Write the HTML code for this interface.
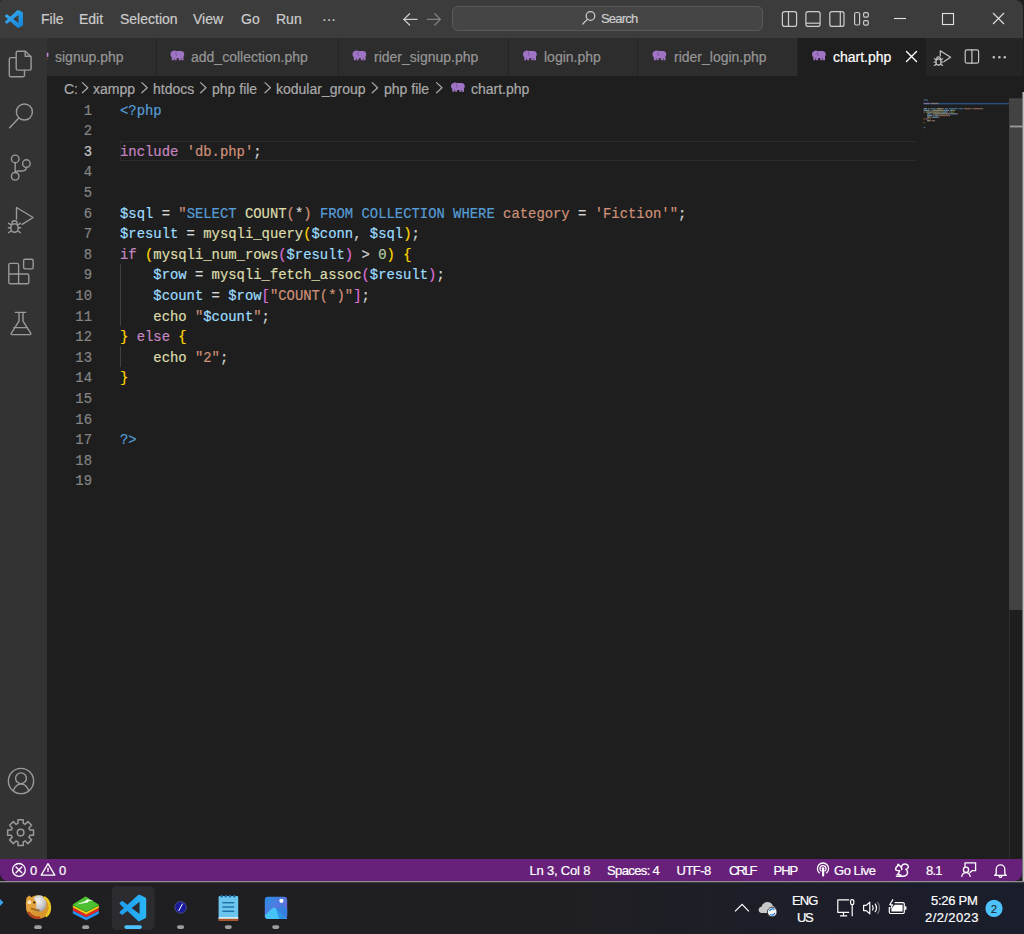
<!DOCTYPE html>
<html><head><meta charset="utf-8">
<style>
*{box-sizing:border-box;margin:0;padding:0}
html,body{width:1024px;height:934px;overflow:hidden;background:#1e1e22}
body{position:relative;font-family:"Liberation Sans",sans-serif;}
.a{position:absolute;white-space:pre;-webkit-text-stroke:0.2px currentColor}
#title{left:0;top:0;width:1023px;height:38px;background:#3c3c3c;border-top-right-radius:8px;border-top-left-radius:2px}
.menu{top:11px;font-size:14px;color:#cccccc;line-height:16px}
#act{left:0;top:38px;width:47px;height:821px;background:#333333}
#tabs{left:47px;top:38px;width:976px;height:38px;background:#252526}
.tab{top:38px;height:38px;background:#2d2d2d;border-right:1px solid #252526}
.tabt{top:49px;font-size:14px;color:#969696;line-height:16px}
#editor{left:47px;top:76px;width:976px;height:783px;background:#1e1e1e}
.bc{top:81px;font-size:14px;color:#a9a9a9;line-height:16px}
.ln{font-family:"Liberation Mono",monospace;font-size:13.88px;line-height:20.6px;color:#858585;text-align:right;width:40px;left:52px}
.code{font-family:"Liberation Mono",monospace;font-size:13.88px;line-height:20.6px;color:#d4d4d4;left:120px}
#status{left:0;top:859px;width:1022px;height:22px;background:#68217a;border-bottom-left-radius:8px;border-bottom-right-radius:8px}
.st{top:862.5px;font-size:13px;color:#ffffff;line-height:16px}
#taskbar{left:0;top:882px;width:1024px;height:52px;background:linear-gradient(90deg,#1f1f22 0%,#1f1f23 55%,#1c1e29 80%,#1a1d2b 100%)}
.tk{font-size:12px;color:#ffffff;line-height:14px}
.v{color:#9cdcfe}.k{color:#569cd6}.s{color:#ce9178}.f{color:#dcdcaa}.p{color:#c586c0}.n{color:#b5cea8}.g{color:#ffd700}.o{color:#da70d6}.w{color:#d4d4d4}
</style></head><body>
<div class="a" id="title"></div>
<div class="a" id="act"></div>
<div class="a" id="tabs"></div>
<div class="a" id="editor"></div>
<div class="a" id="status"></div>
<div class="a" id="taskbar"></div>
<div class="a tab" style="left:47px;width:110px"></div>
<div class="a tab" style="left:157px;width:182px"></div>
<div class="a tab" style="left:339px;width:170px"></div>
<div class="a tab" style="left:509px;width:129px"></div>
<div class="a tab" style="left:638px;width:160px"></div>
<div class="a tab" style="left:798px;width:128px;background:#1e1e1e;border-right:none"></div>
<div class="a" style="left:452px;top:6px;width:311px;height:25px;border-radius:6px;background:#454545;border:1px solid #5a5a5a"></div>
<!-- current line -->
<div class="a" style="left:120px;top:141px;width:797px;height:20px;border:1.6px solid #2a2a2a;border-right:none"></div>


<svg class="a" style="left:0;top:0" width="1024" height="934" viewBox="0 0 1024 934">
<defs>
<linearGradient id="vsg" x1="0" y1="0" x2="1" y2="1"><stop offset="0" stop-color="#3cb4f5"/><stop offset="1" stop-color="#1280d8"/></linearGradient>
</defs>
<!-- VS Code logo title -->
<g transform="translate(5,10) scale(0.18)"><path fill="url(#vsg)" d="M96.46 10.8L75.86.87a6.23 6.23 0 0 0-7.1 1.2L29.33 38.04 12.15 25a4.16 4.16 0 0 0-5.320.24L1.33 30.25a4.17 4.17 0 0 0 0 6.16L16.23 50 1.33 63.59a4.17 4.17 0 0 0 0 6.160l5.5 5a4.16 4.16 0 0 0 5.32.24l17.18-13.04 39.43 35.97a6.22 6.22 0 0 0 7.1 1.2l20.6-9.92A6.25 6.25 0 0 0 100 83.6V16.4a6.25 6.25 0 0 0-3.540-5.6zM75 72.7L45.1 50 75 27.3z"/></g>
<!-- nav arrows -->
<g fill="none" stroke="#cccccc" stroke-width="1.3" stroke-linecap="round" stroke-linejoin="round">
<path d="M403.6 19.4h13.4M409.6 13.8l-5.8 5.6 5.8 5.6"/>
</g>
<g fill="none" stroke="#808080" stroke-width="1.3" stroke-linecap="round" stroke-linejoin="round">
<path d="M427.4 19.4h12.8M434.8 13.8l5.6 5.6-5.6 5.6"/>
</g>
<!-- search magnifier -->
<g fill="none" stroke="#cccccc" stroke-width="1.2" stroke-linecap="round"><circle cx="590.5" cy="16" r="4.3"/><path d="M587.3 19.3l-4.5 4.7"/></g>
<!-- layout icons -->
<g fill="none" stroke="#cccccc" stroke-width="1.2">
<rect x="782.4" y="11.6" width="14.2" height="14.8" rx="2.2"/><path d="M788.5 11.6v14.8"/>
<rect x="805.9" y="11.6" width="14.2" height="14.8" rx="2.2"/><path d="M805.9 23.2h14.2"/>
<rect x="829.8" y="11.6" width="14.2" height="14.8" rx="2.2"/><path d="M840.3 11.6v14.8"/>
<rect x="854.6" y="12.5" width="5" height="12.5" rx="1.5"/><rect x="863.6" y="12.6" width="4.7" height="4.5" rx="1.3"/><rect x="863.6" y="20.6" width="4.7" height="4.5" rx="1.3"/>
</g>
<!-- window controls -->
<g fill="none" stroke="#e0e0e0" stroke-width="1.1">
<path d="M894 18.5h12"/>
<rect x="942.5" y="13.5" width="11" height="11"/>
<path d="M993 13l11 11M1004 13l-11 11"/>
</g>
<!-- activity bar icons -->
<g fill="none" stroke="#9a9a9a" stroke-width="1.4" stroke-linejoin="round" stroke-linecap="round">
<path d="M16.2 55.5v-2.6a1.6 1.6 0 0 1 1.6-1.6h7.6l5.7 5.6v11.6a1.6 1.6 0 0 1-1.6 1.6h-11.7a1.6 1.6 0 0 1-1.6-1.6z"/>
<path d="M25.2 51.5v4.8h5.6"/>
<path d="M16.2 57.6h-5.3a1.6 1.6 0 0 0-1.6 1.6v16a1.6 1.6 0 0 0 1.6 1.6h12a1.6 1.6 0 0 0 1.6-1.6v-5"/>
<circle cx="24.4" cy="112" r="8"/><path d="M18.6 118.2l-9 9.6"/>
<circle cx="15.2" cy="158.9" r="3.8"/><circle cx="26.4" cy="163.6" r="3.8"/><circle cx="15.2" cy="176.3" r="3.8"/>
<path d="M15.2 162.7v9.8M26.4 167.4c0 3-2.5 3.6-5.5 3.6h-2.5c-2 0-3.2 0.5-3.2 1.5"/>
<path d="M16.5 219V207.5l16.6 10-11 6.8"/>
<ellipse cx="14.5" cy="228" rx="3.7" ry="4.3"/><path d="M11.9 223.4a2.6 2.6 0 0 1 5.2 0M10.8 227.8H8.4M18.2 227.8h2.4M11.2 224.9l-2.6-1.6M17.8 224.9l2.6-1.6M11.2 231l-2.6 1.6M17.8 231l2.6 1.6"/>
<path d="M8.8 274V265a1.6 1.6 0 0 1 1.6-1.6h6.6a1.6 1.6 0 0 1 1.6 1.6v9h8.6a1.6 1.6 0 0 1 1.6 1.6v6.6a1.6 1.6 0 0 1-1.6 1.6H10.4a1.6 1.6 0 0 1-1.6-1.6zM8.8 274h9.8v9.8"/>
<rect x="23.6" y="259.3" width="9.6" height="9.6" rx="1.6"/>
<path d="M15.4 312.4h10.3M19 312.4v8.8l-7.8 12.2a0.8 0.8 0 0 0 0.7 1.2h18.2a0.8 0.8 0 0 0 0.7-1.2l-7.8-12.2v-8.8M13.8 327.6h13.6"/>
<circle cx="21" cy="781" r="12.6"/><circle cx="21" cy="778.3" r="5.4"/><path d="M13.4 790.4c1.6-4 4.4-6.4 7.6-6.4s6 2.4 7.6 6.4"/>
</g>
<!-- gear -->
<g transform="translate(20.6,832.6)" fill="none" stroke="#9a9a9a" stroke-width="1.5" stroke-linejoin="round">
<path d="M-2.65 -9.23 L-2.62 -12.94 L2.62 -12.94 L2.65 -9.23 L4.65 -8.40 L7.29 -11.00 L11.00 -7.29 L8.40 -4.65 L9.23 -2.65 L12.94 -2.62 L12.94 2.62 L9.23 2.65 L8.40 4.65 L11.00 7.29 L7.29 11.00 L4.65 8.40 L2.65 9.23 L2.62 12.94 L-2.62 12.94 L-2.65 9.23 L-4.65 8.40 L-7.29 11.00 L-11.00 7.29 L-8.40 4.65 L-9.23 2.65 L-12.94 2.62 L-12.94 -2.62 L-9.23 -2.65 L-8.40 -4.65 L-11.00 -7.29 L-7.29 -11.00 L-4.65 -8.40Z"/>
<circle r="3.3"/>
</g>
<!-- tab actions -->
<g fill="none" stroke="#c5c5c5" stroke-width="1.2" stroke-linecap="round" stroke-linejoin="round">
<path d="M906.5 51.5l10 10M916.5 51.5l-10 10" stroke="#ffffff" stroke-width="1.4"/>
<path d="M940.3 56V50.8l10.3 6.5-6.5 4.3"/>
<ellipse cx="938.5" cy="62" rx="2.6" ry="3.2"/><path d="M936.7 58.6a1.8 1.8 0 0 1 3.6 0M935.9 62h-1.8M941.1 62h1.8M936.2 59.8l-1.8-1.1M940.8 59.8l1.8-1.1M936.2 64.3l-1.8 1.1M940.8 64.3l1.8 1.1"/>
<rect x="965.2" y="49.8" width="13.4" height="13.4" rx="1.8"/><path d="M971.9 49.8v13.4"/>
</g>
<g fill="#c5c5c5"><circle cx="993.8" cy="57.3" r="1.2"/><circle cx="999.4" cy="57.3" r="1.2"/><circle cx="1004.8" cy="57.3" r="1.2"/></g>
</svg>


<!-- breadcrumb chevrons + elephant icons, indent guides, minimap, scrollbar -->
<svg class="a" style="left:0;top:0" width="1024" height="934" viewBox="0 0 1024 934">
<defs>
<g id="ele">
<path d="M2.2 0.6C0.9 0.9 0 2.2 0 3.8c0 1.4 0.6 2.6 1.4 3.4v3.1h2.2V8.4h0.8v1.9h2.2V8.1h2.4v2.2h2.2V8.2h0.6v2.1h2.2V6.3c0.8-0.9 1-2.2 0.6-3.4C14.1 1.3 12.9 0.5 11.4 0.5H6.3C5.6 0.1 4.7-0.1 3.9 0 3.3 0.1 2.7 0.3 2.2 0.6z" fill="#a074c4"/>
<path d="M6.1 1.2c-0.5 1.5-0.5 3.2 0.6 4.4" fill="none" stroke="#6f4f9a" stroke-width="0.9"/>
</g>
</defs>
<g fill="none" stroke="#a9a9a9" stroke-width="1.2" stroke-linecap="round" stroke-linejoin="round">
<path d="M82.4 82.6l5.4 5.1-5.4 5.1M141.8 82.6l5.4 5.1-5.4 5.1M200.6 82.6l5.4 5.1-5.4 5.1M265 82.6l5.4 5.1-5.4 5.1M372.2 82.6l5.4 5.1-5.4 5.1M436.6 82.6l5.4 5.1-5.4 5.1"/>
</g>
<use href="#ele" transform="translate(451,82.6) scale(0.93,0.9)"/>
<use href="#ele" transform="translate(170.5,50.6) scale(0.93,0.93)"/>
<use href="#ele" transform="translate(352.5,50.6) scale(0.93,0.93)"/>
<use href="#ele" transform="translate(523,50.6) scale(0.93,0.93)"/>
<use href="#ele" transform="translate(652.5,50.6) scale(0.93,0.93)"/>
<use href="#ele" transform="translate(812,50.6) scale(0.93,0.93)"/>
<rect x="46.8" y="52.6" width="1.6" height="4.4" rx="0.8" fill="#c088d8"/><rect x="46.8" y="58.4" width="1.2" height="1.2" fill="#7a4a3a"/>
<!-- indent guides -->
<g fill="#404040"><rect x="120" y="264.2" width="1" height="61.8"/><rect x="120" y="346.6" width="1" height="20.6"/></g>
<!-- minimap -->
<rect x="923.5" y="102.9" width="85.5" height="1.5" fill="#27507a"/>
<g opacity="0.55"><rect x="923.60" y="99.40" width="4.38" height="1.3" fill="#569cd6"/><rect x="923.60" y="102.84" width="6.12" height="1.3" fill="#c586c0"/><rect x="930.60" y="102.84" width="7.00" height="1.3" fill="#ce9178"/><rect x="937.60" y="102.84" width="0.88" height="1.3" fill="#d4d4d4"/><rect x="923.60" y="108.00" width="3.50" height="1.3" fill="#9cdcfe"/><rect x="927.98" y="108.00" width="0.88" height="1.3" fill="#d4d4d4"/><rect x="929.73" y="108.00" width="0.88" height="1.3" fill="#ce9178"/><rect x="930.60" y="108.00" width="5.25" height="1.3" fill="#569cd6"/><rect x="936.73" y="108.00" width="4.38" height="1.3" fill="#dcdcaa"/><rect x="941.10" y="108.00" width="0.88" height="1.3" fill="#ce9178"/><rect x="941.98" y="108.00" width="0.88" height="1.3" fill="#d4d4d4"/><rect x="942.85" y="108.00" width="0.88" height="1.3" fill="#ce9178"/><rect x="944.60" y="108.00" width="3.50" height="1.3" fill="#569cd6"/><rect x="948.98" y="108.00" width="8.75" height="1.3" fill="#569cd6"/><rect x="958.60" y="108.00" width="4.38" height="1.3" fill="#569cd6"/><rect x="963.85" y="108.00" width="7.00" height="1.3" fill="#ce9178"/><rect x="971.73" y="108.00" width="0.88" height="1.3" fill="#d4d4d4"/><rect x="973.48" y="108.00" width="7.88" height="1.3" fill="#ce9178"/><rect x="981.35" y="108.00" width="0.88" height="1.3" fill="#ce9178"/><rect x="982.23" y="108.00" width="0.88" height="1.3" fill="#d4d4d4"/><rect x="923.60" y="109.72" width="6.12" height="1.3" fill="#9cdcfe"/><rect x="930.60" y="109.72" width="0.88" height="1.3" fill="#d4d4d4"/><rect x="932.35" y="109.72" width="10.50" height="1.3" fill="#dcdcaa"/><rect x="942.85" y="109.72" width="0.88" height="1.3" fill="#ffd700"/><rect x="943.73" y="109.72" width="4.38" height="1.3" fill="#9cdcfe"/><rect x="948.10" y="109.72" width="0.88" height="1.3" fill="#d4d4d4"/><rect x="949.85" y="109.72" width="3.50" height="1.3" fill="#9cdcfe"/><rect x="953.35" y="109.72" width="0.88" height="1.3" fill="#ffd700"/><rect x="954.23" y="109.72" width="0.88" height="1.3" fill="#d4d4d4"/><rect x="923.60" y="111.44" width="1.75" height="1.3" fill="#c586c0"/><rect x="926.23" y="111.44" width="0.88" height="1.3" fill="#ffd700"/><rect x="927.10" y="111.44" width="13.12" height="1.3" fill="#dcdcaa"/><rect x="940.23" y="111.44" width="0.88" height="1.3" fill="#da70d6"/><rect x="941.10" y="111.44" width="6.12" height="1.3" fill="#9cdcfe"/><rect x="947.23" y="111.44" width="0.88" height="1.3" fill="#da70d6"/><rect x="948.98" y="111.44" width="0.88" height="1.3" fill="#d4d4d4"/><rect x="950.73" y="111.44" width="0.88" height="1.3" fill="#b5cea8"/><rect x="951.60" y="111.44" width="0.88" height="1.3" fill="#ffd700"/><rect x="953.35" y="111.44" width="0.88" height="1.3" fill="#ffd700"/><rect x="927.10" y="113.16" width="3.50" height="1.3" fill="#9cdcfe"/><rect x="931.48" y="113.16" width="0.88" height="1.3" fill="#d4d4d4"/><rect x="933.23" y="113.16" width="15.75" height="1.3" fill="#dcdcaa"/><rect x="948.98" y="113.16" width="0.88" height="1.3" fill="#da70d6"/><rect x="949.85" y="113.16" width="6.12" height="1.3" fill="#9cdcfe"/><rect x="955.98" y="113.16" width="0.88" height="1.3" fill="#da70d6"/><rect x="956.85" y="113.16" width="0.88" height="1.3" fill="#d4d4d4"/><rect x="927.10" y="114.88" width="5.25" height="1.3" fill="#9cdcfe"/><rect x="933.23" y="114.88" width="0.88" height="1.3" fill="#d4d4d4"/><rect x="934.98" y="114.88" width="3.50" height="1.3" fill="#9cdcfe"/><rect x="938.48" y="114.88" width="0.88" height="1.3" fill="#da70d6"/><rect x="939.35" y="114.88" width="8.75" height="1.3" fill="#ce9178"/><rect x="948.10" y="114.88" width="0.88" height="1.3" fill="#da70d6"/><rect x="948.98" y="114.88" width="0.88" height="1.3" fill="#d4d4d4"/><rect x="927.10" y="116.60" width="3.50" height="1.3" fill="#dcdcaa"/><rect x="931.48" y="116.60" width="0.88" height="1.3" fill="#ce9178"/><rect x="932.35" y="116.60" width="5.25" height="1.3" fill="#9cdcfe"/><rect x="937.60" y="116.60" width="0.88" height="1.3" fill="#ce9178"/><rect x="938.48" y="116.60" width="0.88" height="1.3" fill="#d4d4d4"/><rect x="923.60" y="118.32" width="0.88" height="1.3" fill="#ffd700"/><rect x="925.35" y="118.32" width="3.50" height="1.3" fill="#c586c0"/><rect x="929.73" y="118.32" width="0.88" height="1.3" fill="#ffd700"/><rect x="927.10" y="120.04" width="3.50" height="1.3" fill="#dcdcaa"/><rect x="931.48" y="120.04" width="2.62" height="1.3" fill="#ce9178"/><rect x="934.10" y="120.04" width="0.88" height="1.3" fill="#d4d4d4"/><rect x="923.60" y="121.76" width="0.88" height="1.3" fill="#ffd700"/><rect x="923.60" y="126.92" width="1.75" height="1.3" fill="#569cd6"/></g>
<!-- scrollbar -->
<rect x="1009" y="99" width="13.5" height="511" fill="#424242"/>
<rect x="1009" y="98.5" width="13.5" height="1.2" fill="#4f4f4f"/>
<rect x="1010" y="125.6" width="12.5" height="1.8" fill="#9e9e9e"/>
<rect x="1009" y="610" width="1" height="249" fill="#2f2f2f"/>
<rect x="1022.5" y="92" width="1.5" height="790" fill="#bdbdbd"/>
</svg>


<!-- status + taskbar icons -->
<svg class="a" style="left:0;top:0" width="1024" height="934" viewBox="0 0 1024 934">
<defs>
<linearGradient id="vsg2" x1="0" y1="0" x2="1" y2="0"><stop offset="0" stop-color="#1f9cf0"/><stop offset="1" stop-color="#29b6f6"/></linearGradient>
<linearGradient id="ph" x1="0" y1="0" x2="1" y2="1"><stop offset="0" stop-color="#2b8fe6"/><stop offset="1" stop-color="#7d5fd8"/></linearGradient>
<radialGradient id="ffx" cx="0.45" cy="0.35" r="0.7"><stop offset="0" stop-color="#f4f4f4"/><stop offset="0.6" stop-color="#c8c8c8"/><stop offset="1" stop-color="#9a9aa0"/></radialGradient>
</defs>
<!-- status bar border line -->
<rect x="0" y="881" width="1024" height="1.3" fill="#8e8e8e"/>
<g fill="none" stroke="#ffffff" stroke-width="1.3" stroke-linecap="round" stroke-linejoin="round">
<circle cx="18.9" cy="869.9" r="6.4"/><path d="M16 867l5.8 5.8M21.8 867l-5.8 5.8"/>
<path d="M48 863.6l-6.8 11.6h13.6z"/><path d="M48 868.2v3.4"/>
<path d="M819.4 872.9A5.6 5.6 0 1 1 826.6 872.9M821.1 870.9A3 3 0 1 1 824.9 870.9"/>
<path d="M961.8 876.4c0.5-2.4 2-3.8 4.2-3.8s3.7 1.4 4.2 3.8"/><circle cx="966" cy="869.8" r="2.6"/>
<path d="M965 866.5v-3.6h10.6v7.8h-3.6l-2 1.8"/>
<path d="M996.2 873.8v-4.6a4.3 4.3 0 0 1 8.6 0v4.6l1.5 1.6h-11.6z"/><path d="M999.2 876.4a1.4 1.4 0 0 0 2.6 0"/>
</g>
<rect x="822" y="868" width="2.2" height="8.4" rx="1" fill="#ffffff"/>
<circle cx="823" cy="868.6" r="1.3" fill="#ffffff"/>
<!-- squirrel -->
<g fill="none" stroke="#ffffff" stroke-width="1.4" stroke-linejoin="round" stroke-linecap="round">
<path d="M901.8 869.6C900.4 866.4 902.4 864 905 864c2.6 0 3.6 2.2 3.2 3.6-0.3 1-1.2 1.6-2.4 1.6 1.4 1 2 2.6 1.6 4.2-0.5 1.8-2 2.9-4.4 2.9h-6.6"/>
<path d="M895.6 869.2c0.1-1.6 1-2.8 2-3.2l0.4-1.8 1.6 1.4c1.2 0.5 2 1.6 2 3"/>
<path d="M895.6 869.2c0.2 1 1 1.4 2 1.4h1.6M899.6 870.8c-0.4 1.8-1.6 3.4-2.4 3.8 1.4-0.2 2.8 0 3.8 0.6"/>
</g>
<!-- taskbar -->
<path d="M0 899l3.4 3.4L0 906z" fill="#3aa0f0"/>
<!-- firefox doge -->
<circle cx="38" cy="907.2" r="11.9" fill="#d8962e"/>
<path d="M27 912.4a11.9 11.9 0 0 0 13.6 6.4l-0.6-2.6a9.4 9.4 0 0 1-10.6-5z" fill="#b4441e"/>
<ellipse cx="39" cy="903.6" rx="7.4" ry="8.4" fill="url(#ffx)"/>
<path d="M44 897.2a11.9 11.9 0 0 1 1.6 19.4" fill="none" stroke="#ecc81c" stroke-width="2.6"/>
<path d="M26.4 898l2.6-2.6 3.8 2.6 3.6 4-0.6 7-4 3.6-5.2-2.2-0.8-7z" fill="#e3a23c"/>
<circle cx="29.4" cy="902.2" r="2" fill="#f6e6c0"/>
<circle cx="34.2" cy="902.6" r="1" fill="#1a1a1a"/>
<path d="M31 908.6l8.6 2.2" stroke="#a8681c" stroke-width="2"/>
<rect x="34.2" y="925.3" width="7.6" height="3.8" rx="1.9" fill="#9d9d9d"/>
<!-- bluestacks -->
<path d="M72.8 913.4l13.4 6.8 12.6-6.4v-3l-12.6 6.4-13.4-6.8z" fill="#2196f3"/>
<path d="M72.8 910.4l13.4 6.8 12.6-6.4v-2.6l-12.6 6.4-13.4-6.8z" fill="#e8262a"/>
<path d="M72.8 907.6l13.4 6.8 12.6-6.4v-2.4l-12.6 6.4-13.4-6.8z" fill="#f6c710"/>
<path d="M72.8 904.8v0.4l13.4 6.8 12.6-6.4v-0.6l-13.2-8.4z" fill="#3aae2a"/>
<path d="M85.6 896.6l13.2 8.2-12.6 6.4-13.4-6.6z" fill="#4cc030"/>
<path d="M76.2 904.6l9.4-3.6 1.2-1.8 6.6 1.4-4.6 0.4-1 1.6z" fill="#f4fff0"/>
<rect x="82.2" y="925.3" width="7" height="3.8" rx="1.9" fill="#9d9d9d"/>
<!-- vscode active -->
<rect x="111.8" y="886.3" width="42.8" height="43.4" rx="4.5" fill="#2c2c30"/>
<g transform="translate(119.6,894.6) scale(0.266)"><path fill="url(#vsg2)" d="M96.46 10.8L75.86.87a6.23 6.23 0 0 0-7.1 1.2L29.33 38.04 12.15 25a4.16 4.16 0 0 0-5.320.24L1.33 30.25a4.17 4.17 0 0 0 0 6.16L16.23 50 1.33 63.59a4.17 4.17 0 0 0 0 6.160l5.5 5a4.16 4.16 0 0 0 5.32.24l17.18-13.04 39.43 35.97a6.22 6.22 0 0 0 7.1 1.2l20.6-9.92A6.25 6.25 0 0 0 100 83.6V16.4a6.25 6.25 0 0 0-3.540-5.6zM75 72.7L45.1 50 75 27.3z"/></g>
<rect x="124.3" y="925.3" width="17.6" height="3.6" rx="1.8" fill="#4cc2ff"/>
<!-- small blue circle -->
<circle cx="180.6" cy="907.3" r="5.8" fill="#1a1a9c" stroke="#6a6a8a" stroke-width="0.6"/>
<path d="M182.6 903.6l-4 7.4" stroke="#ffffff" stroke-width="1"/>
<rect x="177" y="925.3" width="7.2" height="3.6" rx="1.8" fill="#9d9d9d"/>
<!-- notepad -->
<rect x="218.6" y="896" width="19.6" height="24.8" rx="1" fill="#6cc6ee"/>
<rect x="218.6" y="918.6" width="19.6" height="2.3" fill="#b4501e"/>
<rect x="218.6" y="917.2" width="19.6" height="1.4" fill="#eaf6fb"/>
<g fill="#1f6ea8"><circle cx="221.6" cy="896.2" r="1.2"/><circle cx="225.8" cy="896.2" r="1.2"/><circle cx="230" cy="896.2" r="1.2"/><circle cx="234.4" cy="896.2" r="1.2"/>
<rect x="222.4" y="902" width="11.8" height="1.4"/><rect x="222.4" y="906.3" width="11.8" height="1.4"/><rect x="222.4" y="910.6" width="11.8" height="1.4"/></g>
<rect x="224.8" y="925.3" width="7" height="3.6" rx="1.8" fill="#9d9d9d"/>
<!-- photos -->
<rect x="264.8" y="896.7" width="22.4" height="22.4" rx="3.4" fill="url(#ph)"/>
<path d="M264.8 915.6l7.6-7.6c0.8-0.8 2.2-0.8 3 0l11.8 11.1h-19.4c-1.6 0-3-1.4-3-3.5z" fill="#45c2f6"/>
<path d="M276.2 909.6l6 -4.8 5 4.4v6.4c0 1.9-1.5 3.5-3.4 3.5h-4.4z" fill="#2a86e0" opacity="0.8"/>
<circle cx="281.4" cy="900.8" r="2.1" fill="#ffffff"/>
<rect x="272.2" y="925.3" width="7.1" height="3.6" rx="1.8" fill="#9d9d9d"/>
<!-- tray -->
<path d="M735 911.4l7.1-7 6.8 7" fill="none" stroke="#ffffff" stroke-width="1.2"/>
<path d="M761.6 913c-1.8 0-3-1.4-3-3.2 0-1.7 1.3-3 3-3.1 0.7-2.8 3-4.8 5.8-4.8 2.6 0 4.8 1.6 5.6 4 1.8 0.3 2.8 1.7 2.8 3.4v3.7z" fill="#c8c8c8"/>
<circle cx="772.2" cy="912" r="4.8" fill="#f4f4f4" stroke="#1c1c20" stroke-width="0.8"/>
<path d="M769.6 911.2a2.8 2.8 0 0 1 4.6-1.6M774.8 912.8a2.8 2.8 0 0 1-4.6 1.6" fill="none" stroke="#1e7ad8" stroke-width="1.2"/>
<g fill="none" stroke="#ffffff" stroke-width="1.2" stroke-linejoin="round">
<path d="M849.2 899.8h-11.4v12.6h11.4M843.5 912.4v3.2M840 915.8h7.2"/>
<rect x="850.6" y="899.6" width="3.2" height="5" rx="1.4"/><path d="M852.2 904.6v11.6"/>
<path d="M863.6 905.4h2.6l3.6-3.2v11.6l-3.6-3.2h-2.6z"/>
<path d="M872.4 905.2c1 1.6 1 3.6 0 5.2M875 903.6c1.8 2.6 1.8 6 0 8.6"/>
<path d="M877.6 902c2.4 3.4 2.4 8.4 0 11.8" stroke="#7a7a7a"/>
<path d="M894.6 902.6h8.2a1.5 1.5 0 0 1 1.5 1.5v7.9a1.5 1.5 0 0 1-1.5 1.5h-12a1.5 1.5 0 0 1-1.5-1.5v-5"/>
<path d="M905.7 906.4v3.4" stroke-width="1.5"/>
<path d="M893 899.4l-3.2 5.4h2.8l-1.8 3.6"/>
</g>
<path d="M894.6 904.8h8v6.8h-11.2v-2.6z" fill="#ffffff"/>
<circle cx="994" cy="908.4" r="8.6" fill="#4cc2ff"/>
<text x="994" y="912.6" font-family="Liberation Sans" font-size="11.5" fill="#1a1a1a" text-anchor="middle">2</text>
</svg>

<!-- menu -->
<div class="a menu" style="left:41px">File</div>
<div class="a menu" style="left:79px">Edit</div>
<div class="a menu" style="left:120px">Selection</div>
<div class="a menu" style="left:193px">View</div>
<div class="a menu" style="left:241px">Go</div>
<div class="a menu" style="left:276px">Run</div>
<div class="a menu" style="left:322px">···</div>

<!-- search -->
<div class="a" style="left:601px;top:10.5px;font-size:13px;letter-spacing:-0.8px;color:#cccccc;line-height:16px">Search</div>

<!-- tabs -->
<div class="a tabt" style="left:55px">signup.php</div>
<div class="a tabt" style="left:191px">add_collection.php</div>
<div class="a tabt" style="left:374px">rider_signup.php</div>
<div class="a tabt" style="left:544px">login.php</div>
<div class="a tabt" style="left:674px">rider_login.php</div>
<div class="a tabt" style="left:833px;color:#ffffff">chart.php</div>

<!-- breadcrumbs -->
<div class="a bc" style="left:64px">C:</div>
<div class="a bc" style="left:93px">xampp</div>
<div class="a bc" style="left:153px">htdocs</div>
<div class="a bc" style="left:212px">php file</div>
<div class="a bc" style="left:276px">kodular_group</div>
<div class="a bc" style="left:384px">php file</div>
<div class="a bc" style="left:471px">chart.php</div>


<!-- line numbers -->
<div class="a ln" style="top:100.6px">1<br>2<br><span style="color:#c6c6c6">3</span><br>4<br>5<br>6<br>7<br>8<br>9<br>10<br>11<br>12<br>13<br>14<br>15<br>16<br>17<br>18<br>19</div>

<!-- code -->
<div class="a code" style="top:100.6px"><span class="k">&lt;?php</span>

<span class="p">include</span> <span class="s">'db.php'</span>;


<span class="v">$sql</span> = <span class="s">"</span><span class="k">SELECT</span> <span class="f">COUNT</span><span class="s">(</span>*<span class="s">)</span> <span class="k">FROM</span> <span class="k">COLLECTION</span> <span class="k">WHERE</span> <span class="s">category</span> = <span class="s">'Fiction'</span><span class="s">"</span>;
<span class="v">$result</span> = <span class="f">mysqli_query</span><span class="g">(</span><span class="v">$conn</span>, <span class="v">$sql</span><span class="g">)</span>;
<span class="p">if</span> <span class="g">(</span><span class="f">mysqli_num_rows</span><span class="o">(</span><span class="v">$result</span><span class="o">)</span> &gt; <span class="n">0</span><span class="g">)</span> <span class="g">{</span>
    <span class="v">$row</span> = <span class="f">mysqli_fetch_assoc</span><span class="o">(</span><span class="v">$result</span><span class="o">)</span>;
    <span class="v">$count</span> = <span class="v">$row</span><span class="o">[</span><span class="s">"COUNT(*)"</span><span class="o">]</span>;
    <span class="f">echo</span> <span class="s">"</span><span class="v">$count</span><span class="s">"</span>;
<span class="g">}</span> <span class="p">else</span> <span class="g">{</span>
    <span class="f">echo</span> <span class="s">"2"</span>;
<span class="g">}</span>


<span class="k">?&gt;</span>
</div>

<!-- status -->
<div class="a st" style="left:529.5px;letter-spacing:-0.2px">Ln 3, Col 8</div>
<div class="a st" style="left:607px;letter-spacing:-0.62px">Spaces: 4</div>
<div class="a st" style="left:676.5px;letter-spacing:-0.5px">UTF-8</div>
<div class="a st" style="left:729px;letter-spacing:-1.8px">CRLF</div>
<div class="a st" style="left:773.5px;letter-spacing:-1px">PHP</div>
<div class="a st" style="left:834px;letter-spacing:-0.45px">Go Live</div>
<div class="a st" style="left:926px;letter-spacing:-0.75px">8.1</div>
<div class="a st" style="left:30px">0</div>
<div class="a st" style="left:59px">0</div>

<!-- taskbar text -->
<div class="a tk" style="left:792px;top:894px;font-size:13px;letter-spacing:-0.85px">ENG</div>
<div class="a tk" style="left:797px;top:911px;font-size:13px;letter-spacing:-1.3px">US</div>
<div class="a tk" style="left:931px;top:894px;font-size:13px;letter-spacing:-0.28px">5:26 PM</div>
<div class="a tk" style="left:925px;top:911px;font-size:13px;letter-spacing:0.4px">2/2/2023</div>
</body></html>
